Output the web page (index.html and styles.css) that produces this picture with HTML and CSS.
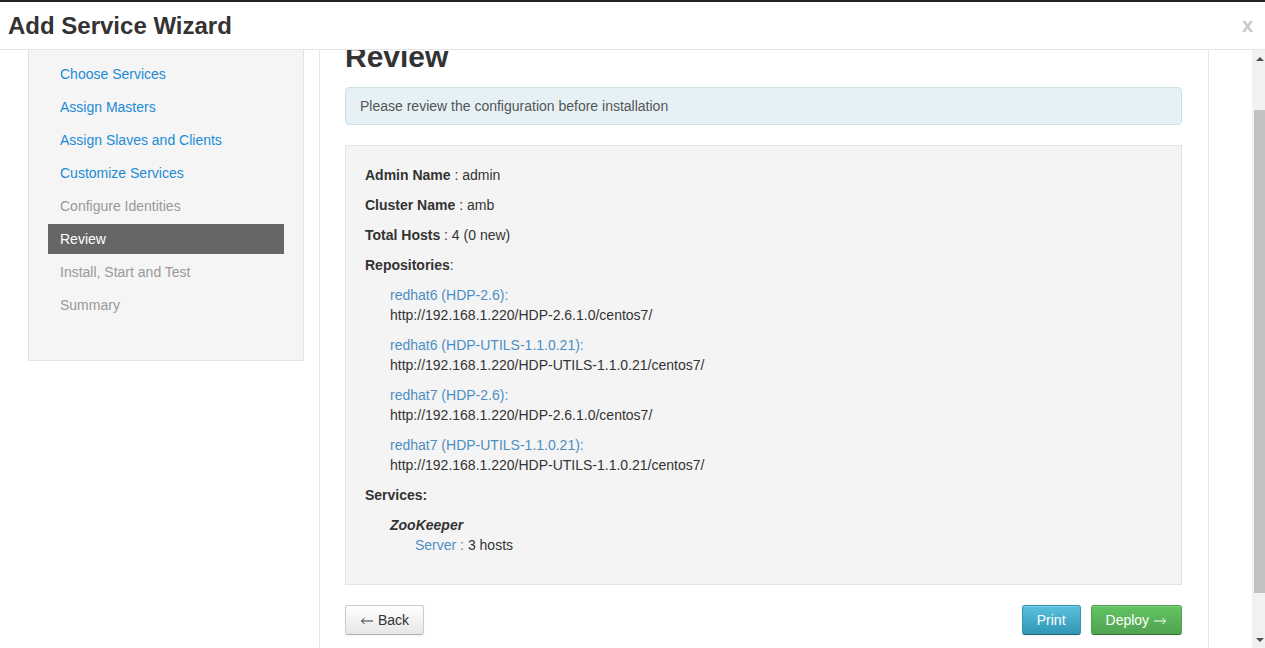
FILE: index.html
```html
<!DOCTYPE html>
<html lang="en">
<head>
    <meta charset="utf-8"/>
    <title>Add Service Wizard</title>
    <link rel="stylesheet" href="styles.css">
</head>
<body>
    <div class="modal">
        <div class="modal-header">
            <h3>Add Service Wizard</h3>
            <span class="close">x</span>
        </div>
        <div class="modal-body">
            <div class="scroll-area">
                <div class="wizard">
                    <!-- Steps -->
                    <div class="sidebar">
                        <ul class="steps">
                            <li><a href="#">Choose Services</a></li>
                            <li><a href="#">Assign Masters</a></li>
                            <li><a href="#">Assign Slaves and Clients</a></li>
                            <li><a href="#">Customize Services</a></li>
                            <li class="disabled">Configure Identities</li>
                            <li class="active">Review</li>
                            <li class="disabled">Install, Start and Test</li>
                            <li class="disabled">Summary</li>
                        </ul>
                    </div>

                    <!-- Review step -->
                    <div class="content">
                        <h2>Review</h2>
                        <div class="alert">Please review the configuration before installation</div>
                        <div class="well">
                            <p><b>Admin Name</b> : admin</p>
                            <p><b>Cluster Name</b> : amb</p>
                            <p><b>Total Hosts</b> : 4 (0 new)</p>
                            <p><b>Repositories</b>:</p>
                            <div class="repo">
                                <span class="repo-name">redhat6 (HDP-2.6):</span>
                                <span>http://192.168.1.220/HDP-2.6.1.0/centos7/</span>
                            </div>
                            <div class="repo">
                                <span class="repo-name">redhat6 (HDP-UTILS-1.1.0.21):</span>
                                <span>http://192.168.1.220/HDP-UTILS-1.1.0.21/centos7/</span>
                            </div>
                            <div class="repo">
                                <span class="repo-name">redhat7 (HDP-2.6):</span>
                                <span>http://192.168.1.220/HDP-2.6.1.0/centos7/</span>
                            </div>
                            <div class="repo">
                                <span class="repo-name">redhat7 (HDP-UTILS-1.1.0.21):</span>
                                <span>http://192.168.1.220/HDP-UTILS-1.1.0.21/centos7/</span>
                            </div>
                            <p><b>Services:</b></p>
                            <div class="service">
                                <div class="service-name">ZooKeeper</div>
                                <div class="component"><span class="repo-name">Server :</span> 3 hosts</div>
                            </div>
                        </div>
                        <div class="actions">
                            <button class="btn"><svg class="arr" width="14" height="8" viewBox="0 0 14 8"><path d="M13 4H1.5M4.5 1l-3 3 3 3" fill="none" stroke="currentColor" stroke-width="1"/></svg> Back</button>
                            <span class="spacer"></span>
                            <button class="btn btn-info">Print</button>
                            <button class="btn btn-success">Deploy <svg class="arr" width="14" height="8" viewBox="0 0 14 8"><path d="M1 4h11.5M9.5 1l3 3-3 3" fill="none" stroke="currentColor" stroke-width="1"/></svg></button>
                        </div>
                    </div>
                </div>
            </div>
            <div class="scrollbar">
                <div class="arrow arrow-up"></div>
                <div class="thumb"></div>
                <div class="arrow arrow-down"></div>
            </div>
        </div>
    </div>
</body>
</html>
```

FILE: styles.css
```css
html, body {
    height: 100%;
    margin: 0;
    padding: 0;
}
body {
    font-family: "Liberation Sans", Arial, sans-serif;
    font-size: 14px;
    line-height: 20px;
    color: #333;
    background: #fff;
    overflow: hidden;
}
.modal {
    height: 648px;
    display: flex;
    flex-direction: column;
}
.modal-header {
    border-top: 2px solid #222;
    border-bottom: 1px solid #e5e5e5;
    height: 47px;
    display: flex;
    align-items: center;
    padding-left: 8px;
}
.modal-header h3 {
    margin: 0;
    font-size: 24px;
    line-height: 46px;
    font-weight: bold;
    color: #333;
    flex: 1;
}
.close {
    font-size: 20px;
    font-weight: bold;
    color: #c8c8c8;
    margin-right: 12px;
    margin-top: -2px;
}
.modal-body {
    flex: 1;
    display: flex;
    overflow: hidden;
}
.scroll-area {
    flex: 1;
    overflow: hidden;
}
.wizard {
    display: flex;
    margin-top: -13px;
    padding-left: 28px;
    min-height: 640px;
}
.sidebar {
    width: 276px;
    margin-right: 15px;
    align-self: flex-start;
}
.steps {
    list-style: none;
    margin: 0;
    padding: 21px 19px 40px;
    background: #f5f5f5;
    border: 1px solid #e3e3e3;
}
.steps li {
    height: 30px;
    line-height: 30px;
    padding-left: 12px;
    margin-bottom: 3px;
}
.steps li:last-child {
    margin-bottom: 0;
}
.steps a {
    color: #1c8bd6;
    text-decoration: none;
}
.steps .disabled {
    color: #999;
}
.steps .active {
    background: #666;
    color: #fff;
}
.content {
    width: 837px;
    padding: 0 26px 0 25px;
    border-left: 1px solid #e5e5e5;
    border-right: 1px solid #e5e5e5;
}
.content h2 {
    margin: 0 0 10px;
    font-size: 30px;
    line-height: 40px;
    font-weight: bold;
}
.alert {
    background: #e6f1f6;
    border: 1px solid #cfdfe6;
    border-radius: 4px;
    padding: 8px 14px;
    color: #555;
    margin-bottom: 20px;
}
.well {
    background: #f4f4f4;
    border: 1px solid #e3e3e3;
    padding: 19px 19px 19px;
}
.well p {
    margin: 0 0 10px;
}
.repo {
    display: flex;
    flex-direction: column;
    padding-left: 25px;
    margin-bottom: 10px;
}
.repo-name {
    color: #4d8ec2;
}
.service {
    padding-left: 25px;
    margin-bottom: 10px;
}
.service-name {
    font-weight: bold;
    font-style: italic;
}
.component {
    padding-left: 25px;
}
.actions {
    display: flex;
    gap: 10px;
    margin-top: 20px;
}
.spacer {
    flex: 1;
}
.btn {
    font-family: "Liberation Sans", Arial, sans-serif;
    font-size: 14px;
    line-height: 20px;
    height: 30px;
    padding: 4px 14px;
    color: #333;
    background: linear-gradient(#fff, #e6e6e6);
    border: 1px solid #ccc;
    border-bottom-color: #b3b3b3;
    border-radius: 3px;
    box-shadow: inset 0 1px 0 rgba(255,255,255,.2), 0 1px 2px rgba(0,0,0,.05);
}
.arr {
    vertical-align: 0;
}
.btn-info {
    color: #fff;
    background: linear-gradient(#5bc0de, #2f96b4);
    border-color: #2f96b4 #2f96b4 #1f6377;
}
.btn-success {
    color: #fff;
    background: linear-gradient(#62c462, #51a351);
    border-color: #51a351 #51a351 #387038;
}
.scrollbar {
    width: 13px;
    background: #f1f1f1;
    display: flex;
    flex-direction: column;
    align-items: flex-end;
}
.arrow {
    width: 11px;
    height: 17px;
    display: flex;
    align-items: center;
    justify-content: center;
}
.arrow-up::before {
    content: "";
    border-left: 4px solid transparent;
    border-right: 4px solid transparent;
    border-bottom: 4px solid #505050;
}
.arrow-down {
    margin-top: auto;
}
.arrow-down::before {
    content: "";
    border-left: 4px solid transparent;
    border-right: 4px solid transparent;
    border-top: 4px solid #505050;
}
.thumb {
    width: 11px;
    height: 483px;
    margin-top: 43px;
    background: #c1c1c1;
}
```
